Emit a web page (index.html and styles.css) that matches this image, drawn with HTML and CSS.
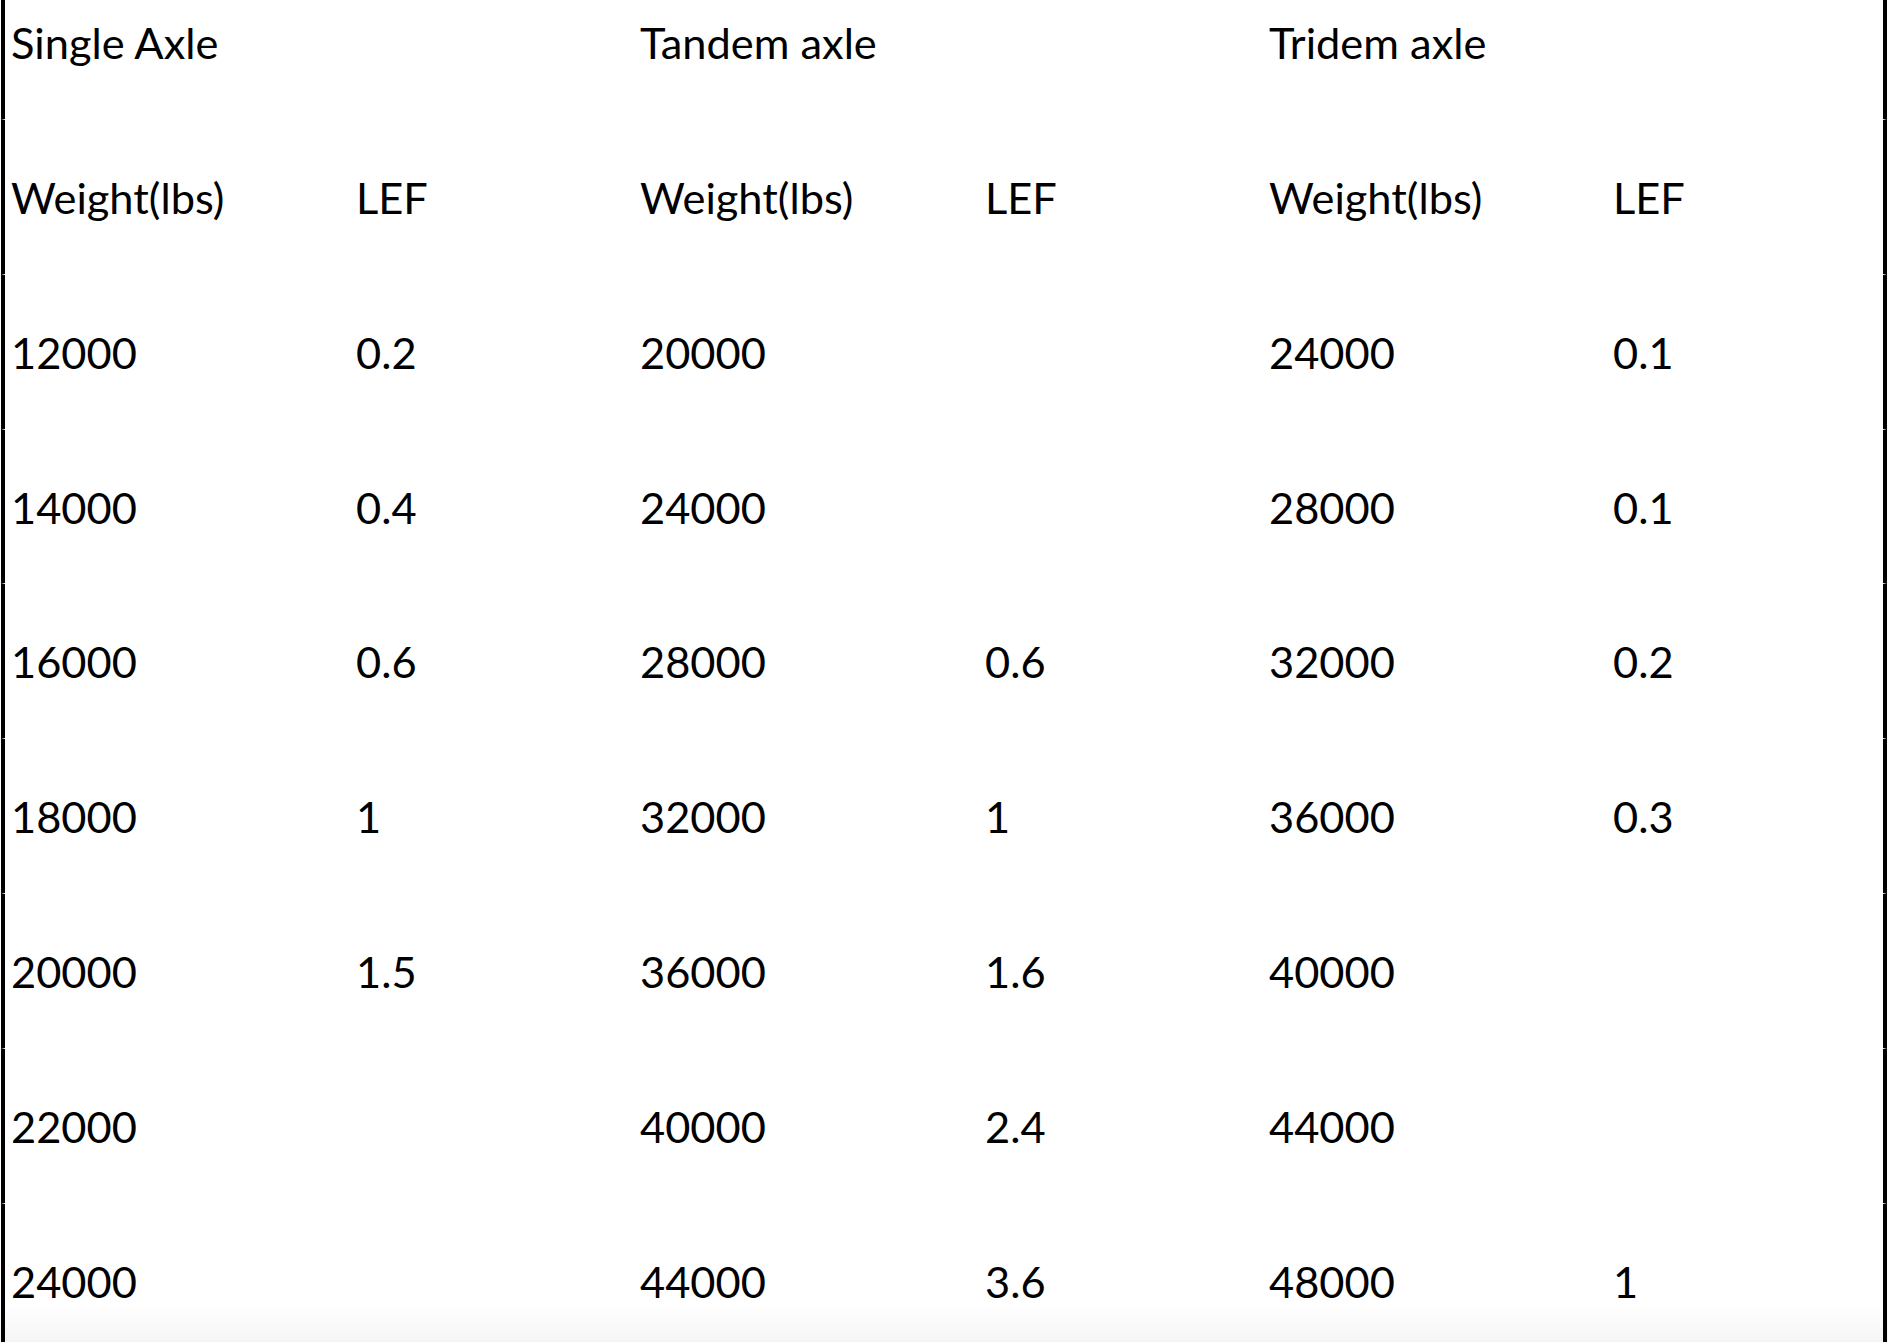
FILE: index.html
```html
<!DOCTYPE html>
<html>
<head>
<meta charset="utf-8">
<title>Load Equivalency Factors</title>
<link rel="stylesheet" href="styles.css">
</head>
<body>
<div class="wrap">
<table class="lef">
<colgroup>
<col class="c1"><col class="c2"><col class="c3"><col class="c4"><col class="c5"><col class="c6">
</colgroup>
<tbody>
<tr><td>Single Axle</td><td></td><td>Tandem axle</td><td></td><td>Tridem axle</td><td></td></tr>
<tr><td>Weight(lbs)</td><td>LEF</td><td>Weight(lbs)</td><td>LEF</td><td>Weight(lbs)</td><td>LEF</td></tr>
<tr><td>12000</td><td>0.2</td><td>20000</td><td></td><td>24000</td><td>0.1</td></tr>
<tr><td>14000</td><td>0.4</td><td>24000</td><td></td><td>28000</td><td>0.1</td></tr>
<tr><td>16000</td><td>0.6</td><td>28000</td><td>0.6</td><td>32000</td><td>0.2</td></tr>
<tr><td>18000</td><td>1</td><td>32000</td><td>1</td><td>36000</td><td>0.3</td></tr>
<tr><td>20000</td><td>1.5</td><td>36000</td><td>1.6</td><td>40000</td><td></td></tr>
<tr><td>22000</td><td></td><td>40000</td><td>2.4</td><td>44000</td><td></td></tr>
<tr><td>24000</td><td></td><td>44000</td><td>3.6</td><td>48000</td><td>1</td></tr>
</tbody>
</table>
</div>
<div class="fade"></div>
</body>
</html>
```
FILE: styles.css
```css
html, body {
  margin: 0;
  padding: 0;
  background: #fff;
  overflow: hidden;
  height: 1342px;
}
.wrap {
  padding-left: 1px;
  margin-top: -36px;
}
.lef {
  border-collapse: separate;
  border-spacing: 0;
  table-layout: fixed;
  width: 1886px;
  font-family: Lato, "Noto Sans", sans-serif;
  font-size: 43.4px;
  color: #000;
}
.c1 { width: 355px; }
.c2 { width: 284px; }
.c3 { width: 345px; }
.c4 { width: 284px; }
.c5 { width: 344px; }
.c6 { width: 274px; }
.lef td {
  height: 154.86px;
  padding: 0;
  vertical-align: middle;
  white-space: nowrap;
  border-top: 1px solid #fff;
  box-sizing: border-box;
}
.lef td:first-child {
  border-left: 4px solid #000;
  padding-left: 6px;
}
.lef td:last-child {
  border-right: 4px solid #000;
}
.fade {
  position: fixed;
  left: 0;
  right: 0;
  bottom: 0;
  height: 36px;
  background: linear-gradient(to bottom, rgba(0,0,0,0), rgba(0,0,0,0.04));
  pointer-events: none;
}
```
